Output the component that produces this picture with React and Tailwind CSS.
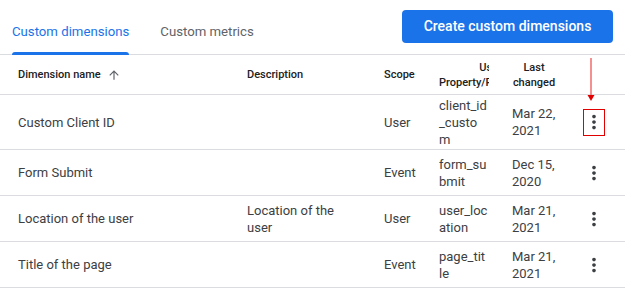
const rows = [
  { name: "Custom Client ID", desc: "", scope: "User", param: "client_id_custom", date: "Mar 22, 2021" },
  { name: "Form Submit", desc: "", scope: "Event", param: "form_submit", date: "Dec 15, 2020" },
  { name: "Location of the user", desc: "Location of the user", scope: "User", param: "user_location", date: "Mar 21, 2021" },
  { name: "Title of the page", desc: "", scope: "Event", param: "page_title", date: "Mar 21, 2021" },
];

const cols = "grid grid-cols-[247px_137px_55px_73px_63px_50px] items-center";

const MoreVert = () => (
  <svg width="22" height="22" viewBox="0 0 24 24" fill="#3c4043">
    <path d="M12 8c1.1 0 2-.9 2-2s-.9-2-2-2-2 .9-2 2 .9 2 2 2zm0 2c-1.1 0-2 .9-2 2s.9 2 2 2 2-.9 2-2-.9-2-2-2zm0 6c-1.1 0-2 .9-2 2s.9 2 2 2 2-.9 2-2-.9-2-2-2z" />
  </svg>
);

const ArrowUp = () => (
  <svg width="14" height="14" viewBox="0 0 24 24" fill="#5f6368" className="ml-[6px]">
    <path d="M4 12l1.41 1.41L11 7.83V20h2V7.83l5.58 5.59L20 12l-8-8-8 8z" />
  </svg>
);

export default function App() {
  return (
    <div className="relative w-[625px] h-[291px] bg-white overflow-hidden font-['Roboto',_'Liberation_Sans',_sans-serif]">
      {/* tabs + button */}
      <div className="flex items-start justify-between h-[55px] border-b border-[#dadce0]">
        <div className="flex h-full pl-[12px] gap-[31px] text-[13.2px]">
          <div className="relative h-full flex items-center pt-[9px] text-[#1a73e8]">
            Custom dimensions
            <div className="absolute left-0 right-0 bottom-[-1px] h-[3px] rounded-t-[3px] bg-[#1a73e8]" />
          </div>
          <div className="h-full flex items-center pt-[9px] text-[#5f6368]">Custom metrics</div>
        </div>
        <button className="mt-[10px] mr-[12px] w-[211px] h-[33px] rounded-[4px] bg-[#1a73e8] text-white text-[14px] font-medium">
          Create custom dimensions
        </button>
      </div>

      {/* header */}
      <div className={`${cols} h-[40px] border-b border-[#dadce0] text-[11px] font-medium text-[#202124] leading-[15px]`}>
        <div className="pl-[18px] flex items-center">
          Dimension name
          <ArrowUp />
        </div>
        <div>Description</div>
        <div>Scope</div>
        <div className="w-[50px] overflow-hidden">
          <div className="w-[63px] text-right">
            <div>User</div>
            <div className="whitespace-nowrap text-left">Property/Parameter</div>
          </div>
        </div>
        <div className="w-[44px] text-center">Last changed</div>
        <div />
      </div>

      {/* rows */}
      {rows.map((r) => (
        <div key={r.name} className={`${cols} min-h-[46px] py-[1.5px] border-b border-[#dadce0] text-[13px] leading-[17px] text-[#3c4043]`}>
          <div className="pl-[18px]">{r.name}</div>
          <div className="pr-[30px]">{r.desc}</div>
          <div>{r.scope}</div>
          <div className="w-[48.6px] break-all">{r.param}</div>
          <div className="pr-[8px]">{r.date}</div>
          <div className="pl-[8px] flex items-center">
            <MoreVert />
          </div>
        </div>
      ))}

      {/* annotation */}
      <svg className="absolute left-[586px] top-[58px]" width="10" height="44" viewBox="0 0 10 44">
        <line x1="5" y1="0" x2="5" y2="38" stroke="#f26b6b" strokeWidth="1.5" />
        <path d="M1.5 37 L8.5 37 L5 43 Z" fill="#e00000" />
      </svg>
      <div className="absolute left-[583px] top-[109px] w-[22px] h-[27px] border border-[#e00000]" />
    </div>
  );
}
